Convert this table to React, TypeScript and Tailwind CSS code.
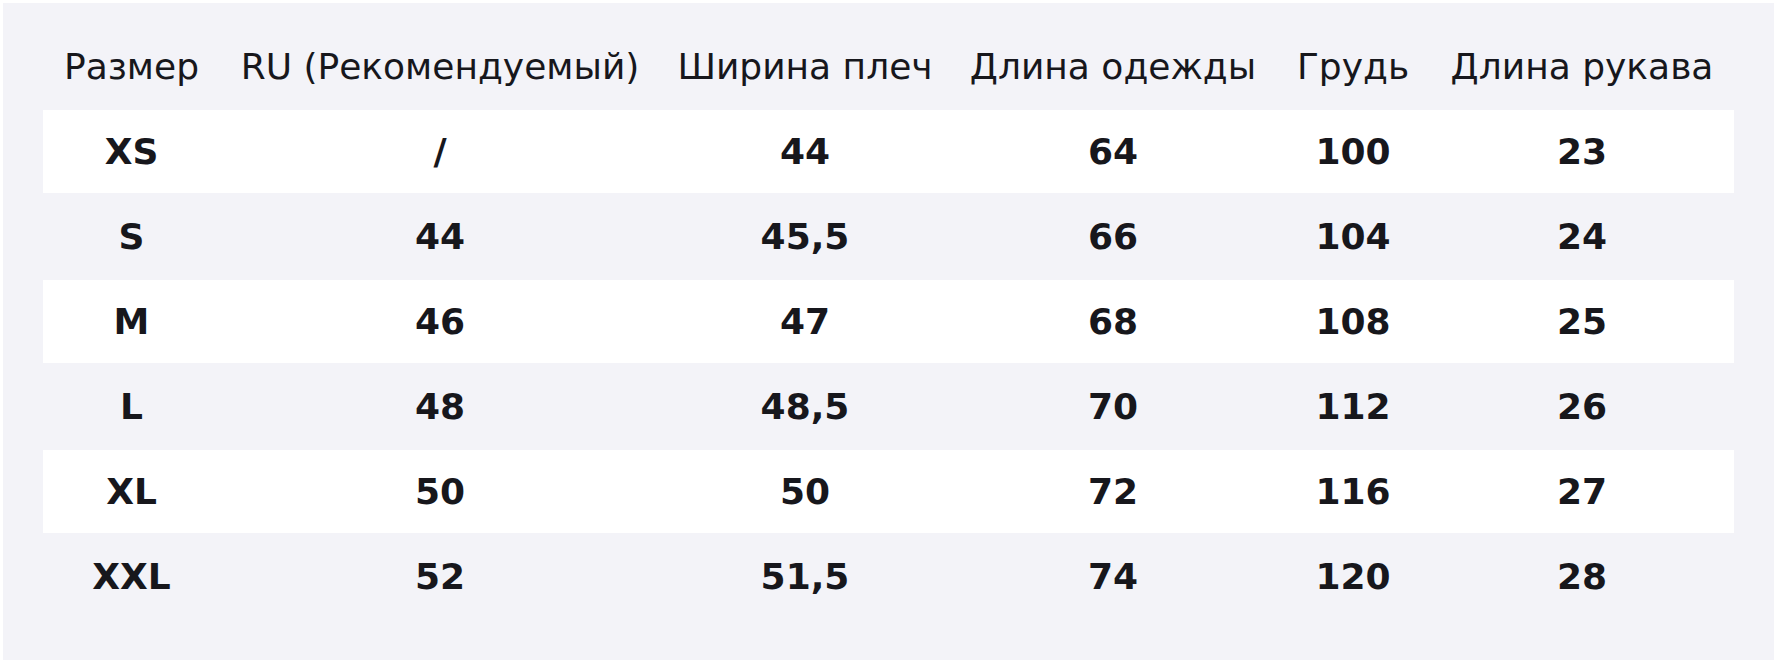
const headers = [
  "Размер",
  "RU (Рекомендуемый)",
  "Ширина плеч",
  "Длина одежды",
  "Грудь",
  "Длина рукава",
];

const colWidths = ["w-[177px]", "w-[440px]", "w-[290px]", "w-[326px]", "w-[154px]", "w-[304px]"];

const rows = [
  ["XS", "/", "44", "64", "100", "23"],
  ["S", "44", "45,5", "66", "104", "24"],
  ["M", "46", "47", "68", "108", "25"],
  ["L", "48", "48,5", "70", "112", "26"],
  ["XL", "50", "50", "72", "116", "27"],
  ["XXL", "52", "51,5", "74", "120", "28"],
];

export default function App() {
  return (
    <div className="w-[1777px] h-[663px] bg-white p-[3px] font-['DejaVu_Sans',sans-serif]">
      <div className="h-[657px] bg-[#f3f3f8] p-[40px] text-[#17171c]">
        <table className="table-fixed border-collapse w-[1691px]">
          <colgroup>
            {colWidths.map((w, i) => (
              <col key={i} className={w} />
            ))}
          </colgroup>
          <thead>
            <tr className="h-[67px]">
              {headers.map((h) => (
                <th
                  key={h}
                  className="align-top pt-[3px] text-center font-normal text-[36px] leading-[42px] whitespace-nowrap"
                >
                  {h}
                </th>
              ))}
            </tr>
          </thead>
          <tbody>
            {rows.map((row, i) => (
              <tr
                key={row[0]}
                className={i % 2 === 0 ? "h-[83px] bg-white" : "h-[87px]"}
              >
                {row.map((cell, j) => (
                  <td
                    key={j}
                    className="align-middle text-center font-bold text-[36px] leading-[42px] whitespace-nowrap"
                  >
                    {cell}
                  </td>
                ))}
              </tr>
            ))}
          </tbody>
        </table>
      </div>
    </div>
  );
}
